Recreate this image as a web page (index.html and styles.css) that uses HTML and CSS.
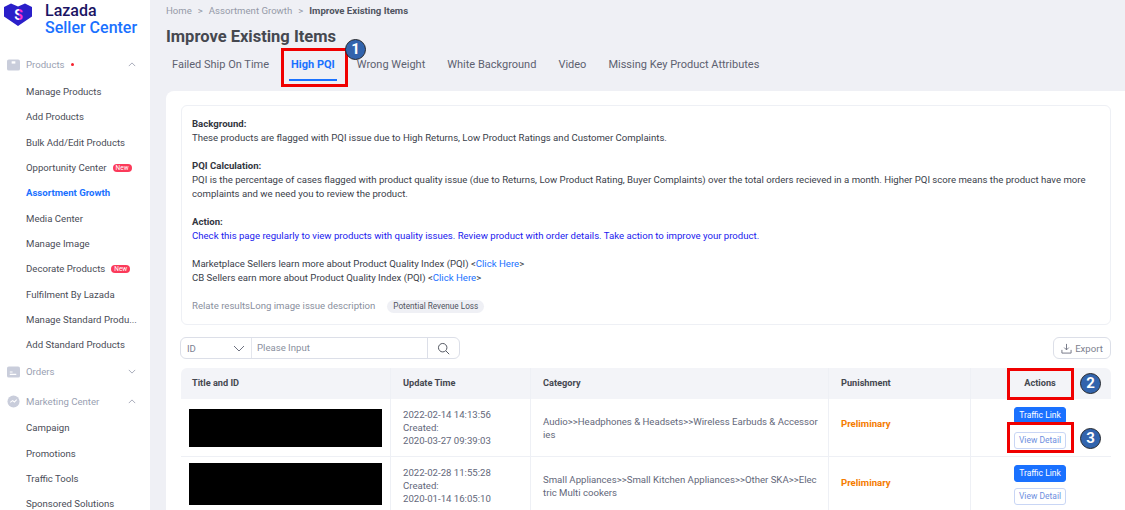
FILE: index.html
```html
<!DOCTYPE html>
<html lang="en">
<head>
<meta charset="utf-8">
<title>Improve Existing Items</title>
<link rel="stylesheet" href="styles.css">
</head>
<body>
<div class="app">
  <aside class="sidebar">
    <div class="brand">
      <svg class="logo" width="28" height="23" viewBox="0 0 28 23"><defs><linearGradient id="sg" x1="0" y1="0" x2="1" y2="0"><stop offset="0.45" stop-color="#ffffff"/><stop offset="0.6" stop-color="#ff2fd0"/></linearGradient></defs><path d="M0 4 7 0.500 14 3.500 21 0.500 28 4V13.500L14 23 0 13.500Z" fill="#2a1fc9"/><text x="14.500" y="17" class="logo-s" fill="url(#sg)">S</text></svg>
      <div class="brand-text"><div class="brand-top">Lazada</div><div class="brand-bottom">Seller Center</div></div>
    </div>
    <nav class="nav">
      <div class="group g1"><svg class="gicon" width="13" height="12" viewBox="0 0 14 12"><rect width="14" height="12" rx="2" fill="#c9cddb"/><path d="M5 2v2.500h4V2" fill="#fff"/></svg><span class="gname">Products</span><span class="dot"></span><svg class="chev" width="8" height="5" viewBox="0 0 10 6"><path d="M1 5 5 1 9 5" /></svg></div>
      <a class="item">Manage Products</a>
      <a class="item">Add Products</a>
      <a class="item">Bulk Add/Edit Products</a>
      <a class="item">Opportunity Center<span class="new">New</span></a>
      <a class="item active">Assortment Growth</a>
      <a class="item">Media Center</a>
      <a class="item">Manage Image</a>
      <a class="item">Decorate Products<span class="new">New</span></a>
      <a class="item">Fulfilment By Lazada</a>
      <a class="item">Manage Standard Produ...</a>
      <a class="item">Add Standard Products</a>
      <div class="group g2"><svg class="gicon" width="13" height="12" viewBox="0 0 14 12"><rect width="14" height="12" rx="2" fill="#c9cddb"/><path d="M3 6h3M3 8.500h7" stroke="#fff" stroke-width="1.200"/></svg><span class="gname">Orders</span><svg class="chev" width="8" height="5" viewBox="0 0 10 6"><path d="M1 1 5 5 9 1" /></svg></div>
      <div class="group g3"><svg class="gicon" width="13" height="13" viewBox="0 0 14 14"><circle cx="7" cy="7" r="6.500" fill="#c9cddb"/><path d="M3.500 8 6 6l2 1.500L10.500 5" fill="none" stroke="#fff" stroke-width="1.100"/></svg><span class="gname">Marketing Center</span><svg class="chev" width="8" height="5" viewBox="0 0 10 6"><path d="M1 5 5 1 9 5" /></svg></div>
      <a class="item">Campaign</a>
      <a class="item">Promotions</a>
      <a class="item">Traffic Tools</a>
      <a class="item">Sponsored Solutions</a>
    </nav>
  </aside>
  <main class="main">
    <div class="crumbs"><span>Home</span><span class="sep">&gt;</span><span>Assortment Growth</span><span class="sep">&gt;</span><b>Improve Existing Items</b></div>
    <h1 class="title">Improve Existing Items</h1>
    <div class="tabs">
      <span class="tab">Failed Ship On Time</span>
      <span class="tab on">High PQI</span>
      <span class="tab">Wrong Weight</span>
      <span class="tab">White Background</span>
      <span class="tab">Video</span>
      <span class="tab">Missing Key Product Attributes</span>
    </div>
    <section class="card">
      <div class="info">
        <p class="h">Background:</p>
        <p>These products are flagged with PQI issue due to High Returns, Low Product Ratings and Customer Complaints.</p>
        <p class="h gap">PQI Calculation:</p>
        <p>PQI is the percentage of cases flagged with product quality issue (due to Returns, Low Product Rating, Buyer Complaints) over the total orders recieved in a month. Higher PQI score means the product have more complaints and we need you to review the product.</p>
        <p class="h gap">Action:</p>
        <p class="blue">Check this page regularly to view products with quality issues. Review product with order details. Take action to improve your product.</p>
        <p class="gap">Marketplace Sellers learn more about Product Quality Index (PQI) &lt;<a>Click Here</a>&gt;</p>
        <p>CB Sellers earn more about Product Quality Index (PQI) &lt;<a>Click Here</a>&gt;</p>
        <div class="relate"><span>Relate resultsLong image issue description</span><span class="pill">Potential Revenue Loss</span></div>
      </div>
      <div class="toolbar">
        <div class="search">
          <div class="sel"><span>ID</span><svg width="12" height="7" viewBox="0 0 12 7"><path d="M1 1 6 6 11 1"/></svg></div>
          <div class="inp">Please Input</div>
          <div class="sbtn"><svg width="16" height="16" viewBox="0 0 16 16"><circle cx="7" cy="7" r="5.200"/><path d="M11 11 15 15"/></svg></div>
        </div>
        <div class="export"><svg width="11" height="11" viewBox="0 0 12 12"><path d="M6 1v6.500M3.500 5 6 7.500 8.500 5M1 7.500V11h10V7.500"/></svg>Export</div>
      </div>
      <div class="table">
        <div class="row head">
          <div class="c c1">Title and ID</div><div class="c c2">Update Time</div><div class="c c3">Category</div><div class="c c4">Punishment</div><div class="c c5">Actions</div>
        </div>
        <div class="row r1">
          <div class="c c1"><div class="black"></div></div>
          <div class="c c2 dates">2022-02-14 14:13:56<br>Created:<br>2020-03-27 09:39:03</div>
          <div class="c c3 cat">Audio&gt;&gt;Headphones &amp; Headsets&gt;&gt;Wireless Earbuds &amp; Accessor<br>ies</div>
          <div class="c c4 pun">Preliminary</div>
          <div class="c c5 acts"><span class="btn pri">Traffic Link</span><span class="btn sec">View Detail</span></div>
        </div>
        <div class="row r2">
          <div class="c c1"><div class="black"></div></div>
          <div class="c c2 dates">2022-02-28 11:55:28<br>Created:<br>2020-01-14 16:05:10</div>
          <div class="c c3 cat">Small Appliances&gt;&gt;Small Kitchen Appliances&gt;&gt;Other SKA&gt;&gt;Elec<br>tric Multi cookers</div>
          <div class="c c4 pun">Preliminary</div>
          <div class="c c5 acts"><span class="btn pri">Traffic Link</span><span class="btn sec">View Detail</span></div>
        </div>
      </div>
    </section>
  </main>
</div>
<div class="mark m-a"></div>
<div class="mark m-b"></div>
<div class="mark m-c"></div>
<div class="badge b-a">1</div>
<div class="badge b-b">2</div>
<div class="badge b-c">3</div>
</body>
</html>
```
FILE: styles.css
```css
* { box-sizing: border-box; }
html, body { margin: 0; padding: 0; height: 510px; overflow: hidden; }
body { position: relative; font-family: Roboto, "Liberation Sans", sans-serif; font-size: 9.6px; color: #3a3e4a; background: #eff0f5; }
p { margin: 0; }
.app { display: flex; width: 1125px; height: 510px; overflow: hidden; }

.sidebar { width: 150px; flex: none; background: #fff; }
.brand { display: flex; gap: 13px; padding: 3px 0 0 4px; height: 52px; }
.logo-s { font: 700 14px Roboto, sans-serif; text-anchor: middle; }
.brand-text { line-height: 17px; font-size: 16px; font-weight: 500; margin-top: -1px; }
.brand-top { color: #1b1464; }
.brand-bottom { color: #1a71ff; }
.nav { display: flex; flex-direction: column; }
.group { display: flex; align-items: center; height: 25px; padding-left: 7px; color: #9a9fb2; position: relative; }
.gicon { flex: none; margin-right: 6px; }
.gname { font-size: 9.6px; }
.dot { width: 3px; height: 3px; margin-left: 6px; border-radius: 50%; background: #f5222d; }
.chev { position: absolute; right: 14px; top: 10px; fill: none; stroke: #a5a9b8; stroke-width: 1.200; }
.item { display: flex; align-items: center; height: 25.3px; padding-left: 26px; font-size: 9.6px; color: #4a4d57; white-space: nowrap; }
.item.active { color: #1a71ff; font-weight: 700; }
.new { margin-left: 6px; height: 8px; line-height: 8px; padding: 0 3px; border-radius: 4px; background: #fb3a5a; color: #fff; font-size: 6.5px; }
.g1 { margin-bottom: 2px; }
.g2 { margin-top: 2px; }
.g3 { margin-top: 5px; margin-bottom: 1px; }

.main { flex: 1; min-width: 0; padding: 4px 0 0 16px; }
.crumbs { display: flex; gap: 6px; height: 13px; line-height: 13px; font-size: 9.6px; color: #959aa8; }
.crumbs b { color: #50545f; font-weight: 700; }
.title { margin: 10px 0 0; height: 20px; line-height: 20px; font-size: 16.5px; font-weight: 700; color: #454850; }
.tabs { display: flex; height: 41px; padding: 9px 0 0 6px; gap: 22px; margin-top: 1px; }
.tab { font-size: 11px; line-height: 16px; color: #5d6170; position: relative; }
.tab.on { color: #1a71ff; font-weight: 700; }
.tab.on::after { content: ""; position: absolute; left: -2px; right: -2px; top: 22px; height: 2px; background: #1a71ff; }

.card { margin-top: 2px; height: 430px; padding: 14px 14px 0 15px; background: #fff; border-radius: 8px 0 0 0; }
.info { height: 220px; border: 1px solid #eef0f5; border-radius: 6px; padding: 11px 10px; line-height: 14px; font-size: 9.6px; color: #3a3e4a; }
.h { font-weight: 700; color: #33363f; }
.gap { margin-top: 14px; }
.blue { color: #1a1aee; }
.info a { color: #1a71ff; }
.relate { display: flex; align-items: center; gap: 12px; margin-top: 14px; color: #8a8f9e; }
.pill { padding: 0 6px; height: 13px; line-height: 13px; font-size: 8.2px; border-radius: 7px; background: #eff0f5; color: #50545f; }

.toolbar { display: flex; justify-content: space-between; margin-top: 12px; height: 22px; }
.search { display: flex; width: 280px; height: 22px; margin-left: -1px; border: 1px solid #dcdfe8; border-radius: 6px; }
.sel { width: 71px; display: flex; justify-content: space-between; align-items: center; padding: 0 6px; border-right: 1px solid #e4e6ed; color: #7d8190; font-size: 9.6px; }
.sel svg { fill: none; stroke: #6d7180; stroke-width: 1; }
.inp { flex: 1; line-height: 20px; padding-left: 5px; color: #8a8f9e; font-size: 9.6px; }
.sbtn { width: 32px; display: flex; align-items: center; justify-content: center; border-left: 1px solid #dcdfe8; }
.sbtn svg { fill: none; stroke: #50545f; stroke-width: 1.200; width: 13px; height: 13px; }
.export { display: flex; align-items: center; justify-content: center; gap: 3px; width: 58px; height: 22px; border: 1px solid #dcdfe8; border-radius: 6px; color: #7d8190; font-size: 9.6px; }
.export svg { fill: none; stroke: #6d7180; stroke-width: 1; }

.table { margin-top: 9px; }
.row { display: flex; border-bottom: 1px solid #eef0f5; }
.head { height: 31px; background: #f3f4f8; border-radius: 6px 6px 0 0; font-weight: 700; font-size: 9.2px; color: #454850; border-bottom: 0; }
.head .c { align-items: center; padding-bottom: 2px; }
.r1 { height: 58px; }
.r2 { height: 60px; }
.c { display: flex; border-right: 1px solid #eef0f5; padding-left: 12px; }
.c1 { width: 210px; padding-left: 11px; }
.c2 { width: 140px; }
.c3 { width: 298px; }
.c4 { width: 142px; }
.c5 { width: 140px; border-right: 0; padding-left: 0; padding-right: 2px; justify-content: center; }
.black { width: 193px; height: 38px; margin: 10px 0 0 -3px; background: #000; }
.r2 .black { margin-top: 6px; height: 42px; }
.dates, .cat { font-size: 9.6px; line-height: 13px; color: #63677a; white-space: nowrap; }
.dates { display: block; padding-top: 9px; }
.r2 .dates { padding-top: 9px; }
.cat { display: block; padding-top: 16px; }
.r2 .cat { padding-top: 16px; }
.pun { align-items: center; padding-bottom: 8px; color: #f57c00; font-weight: 700; font-size: 9.6px; }
.acts { flex-direction: column; align-items: center; justify-content: flex-start; gap: 8px; padding-top: 8px; }
.r2 .acts { gap: 6px; }
.btn { width: 52px; height: 17px; line-height: 15px; text-align: center; border: 1px solid #1a71ff; border-radius: 3px; font-size: 8.5px; }
.pri { background: #1a71ff; color: #fff; }
.sec { background: #fff; color: #6e8fe0; border-color: #c9d6f5; }

.mark { position: absolute; border: 3px solid #f00000; }
.m-a { left: 281px; top: 48px; width: 67px; height: 39px; }
.m-b { left: 1007px; top: 368px; width: 67px; height: 32px; }
.m-c { left: 1007px; top: 422px; width: 67px; height: 31px; }
.badge { position: absolute; width: 21px; height: 21px; border-radius: 50%; background: #3264ad; border: 1px solid #26282c; color: #fff; font-weight: 700; font-size: 15px; line-height: 19px; text-align: center; }
.b-a { left: 345px; top: 39px; }
.b-b { left: 1080px; top: 373px; }
.b-c { left: 1080px; top: 428px; }
```
